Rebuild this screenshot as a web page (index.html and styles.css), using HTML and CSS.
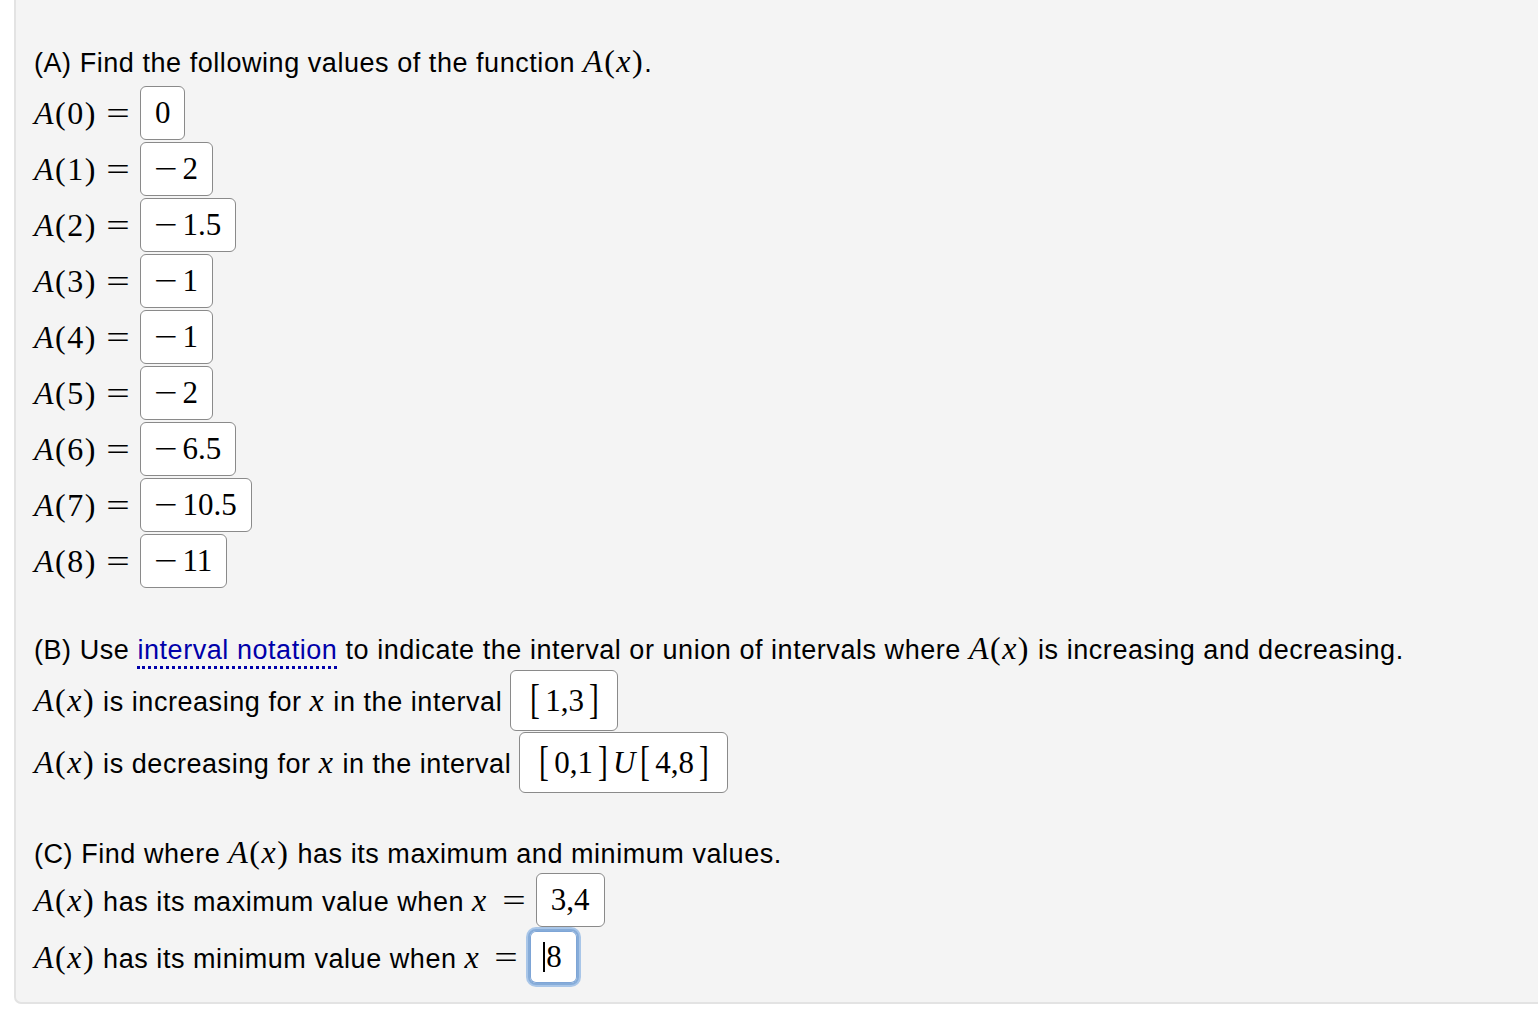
FILE: index.html
```html
<!DOCTYPE html>
<html>
<head>
<meta charset="utf-8">
<link rel="stylesheet" href="styles.css">
</head>
<body>
<div class="panel">
  <section class="part part-a">
    <p class="q">(A) Find the following values of the function <span class="m"><i>A</i>(<i>x</i>)</span>.</p>
    <div class="rows">
      <div class="row"><span class="m"><i>A</i>(0)</span><span class="m eq">=</span><span class="box m">0</span></div>
      <div class="row"><span class="m"><i>A</i>(1)</span><span class="m eq">=</span><span class="box m"><span class="neg">−</span>2</span></div>
      <div class="row"><span class="m"><i>A</i>(2)</span><span class="m eq">=</span><span class="box m"><span class="neg">−</span>1.5</span></div>
      <div class="row"><span class="m"><i>A</i>(3)</span><span class="m eq">=</span><span class="box m"><span class="neg">−</span>1</span></div>
      <div class="row"><span class="m"><i>A</i>(4)</span><span class="m eq">=</span><span class="box m"><span class="neg">−</span>1</span></div>
      <div class="row"><span class="m"><i>A</i>(5)</span><span class="m eq">=</span><span class="box m"><span class="neg">−</span>2</span></div>
      <div class="row"><span class="m"><i>A</i>(6)</span><span class="m eq">=</span><span class="box m"><span class="neg">−</span>6.5</span></div>
      <div class="row"><span class="m"><i>A</i>(7)</span><span class="m eq">=</span><span class="box m"><span class="neg">−</span>10.5</span></div>
      <div class="row"><span class="m"><i>A</i>(8)</span><span class="m eq">=</span><span class="box m"><span class="neg">−</span>11</span></div>
    </div>
  </section>

  <section class="part part-b">
    <p class="q">(B) Use <a class="term" href="#">interval notation</a> to indicate the interval or union of intervals where <span class="m"><i>A</i>(<i>x</i>)</span> is increasing and decreasing.</p>
    <div class="rows tall">
      <div class="row"><span class="m"><i>A</i>(<i>x</i>)</span><span class="t">&nbsp;is increasing for <i class="m">x</i> in the interval</span><span class="box m wide"><span class="br">[</span>1,3<span class="br">]</span></span></div>
      <div class="row"><span class="m"><i>A</i>(<i>x</i>)</span><span class="t">&nbsp;is decreasing for <i class="m">x</i> in the interval</span><span class="box m wide"><span class="br">[</span>0,1<span class="br">]</span><i>U</i><span class="br">[</span>4,8<span class="br">]</span></span></div>
    </div>
  </section>

  <section class="part part-c">
    <p class="q">(C) Find where <span class="m"><i>A</i>(<i>x</i>)</span> has its maximum and minimum values.</p>
    <div class="rows">
      <div class="row"><span class="m"><i>A</i>(<i>x</i>)</span><span class="t">&nbsp;has its maximum value when <i class="m">x</i></span><span class="m eq eq-wide">=</span><span class="box m">3,4</span></div>
      <div class="row"><span class="m"><i>A</i>(<i>x</i>)</span><span class="t">&nbsp;has its minimum value when <i class="m">x</i></span><span class="m eq eq-wide">=</span><span class="box m focus"><span class="caret"></span>8</span></div>
    </div>
  </section>
</div>
</body>
</html>
```
FILE: styles.css
```css
html, body {
  margin: 0;
  padding: 0;
  background: #ffffff;
  overflow: hidden;
}

body {
  font-family: "Liberation Sans", Arial, Helvetica, sans-serif;
  color: #000;
}

.panel {
  margin-left: 14px;
  width: 1600px;
  background: #f4f4f4;
  border-left: 2px solid #e3e3e3;
  border-bottom: 2px solid #e3e3e3;
  border-bottom-left-radius: 7px;
  padding: 44px 0 17px 18px;
  box-sizing: border-box;
}

.part-b {
  margin-top: 43px;
}

.part-c {
  margin-top: 42px;
}

.q {
  margin: 0;
  font-size: 27px;
  line-height: 34px;
  letter-spacing: 0.55px;
  white-space: nowrap;
}

.part-a .q {
  margin-bottom: 6px;
}

.part-b .q {
  margin-bottom: 3px;
}

.part-c .q {
  margin-bottom: 2px;
}

.m {
  font-family: "Liberation Serif", "Times New Roman", serif;
  font-size: 32px;
  letter-spacing: 1.5px;
}

.m i, i.m {
  font-style: italic;
}

.rows {
  display: flex;
  flex-direction: column;
  gap: 2px;
}

.rows.tall {
  gap: 1px;
}

.row {
  display: flex;
  align-items: center;
  white-space: nowrap;
}

.t {
  font-size: 27px;
  letter-spacing: 0.55px;
}

.eq {
  margin: 0 13px 0 12px;
  transform: scaleX(1.3);
  display: inline-block;
  letter-spacing: 0;
}

.eq-wide {
  margin-left: 17px;
  margin-right: 13px;
}

.box {
  display: inline-flex;
  align-items: center;
  height: 54px;
  box-sizing: border-box;
  padding: 0 14px;
  background: #fff;
  border: 1.5px solid #8a8a8a;
  border-radius: 6px;
  font-size: 31px;
  letter-spacing: 0;
}

.box.wide {
  height: 61px;
  margin-left: 8px;
  padding: 0 13px 0 14px;
}

.neg {
  display: inline-block;
  transform: scaleX(1.35);
  margin: 0 8px 0 2px;
}

.br {
  font-size: 42px;
  font-weight: 300;
  transform: scaleX(0.7);
  display: inline-block;
  margin: 0 3px;
  position: relative;
  top: -2px;
}

.box i {
  font-style: italic;
}

.focus {
  height: 56px;
  border: 2px solid #86acd9;
  box-shadow: 0 0 0 2px #a9c6e8, inset 0 0 0 1px #7ea5d6;
  border-radius: 8px;
  padding: 0 15px 0 13px;
}

.caret {
  display: inline-block;
  width: 2px;
  height: 30px;
  background: #000;
  margin-right: 1px;
}

.term {
  color: #0000aa;
  text-decoration: none;
  border-bottom: 3px dotted #0000aa;
  padding-bottom: 1px;
}
```
